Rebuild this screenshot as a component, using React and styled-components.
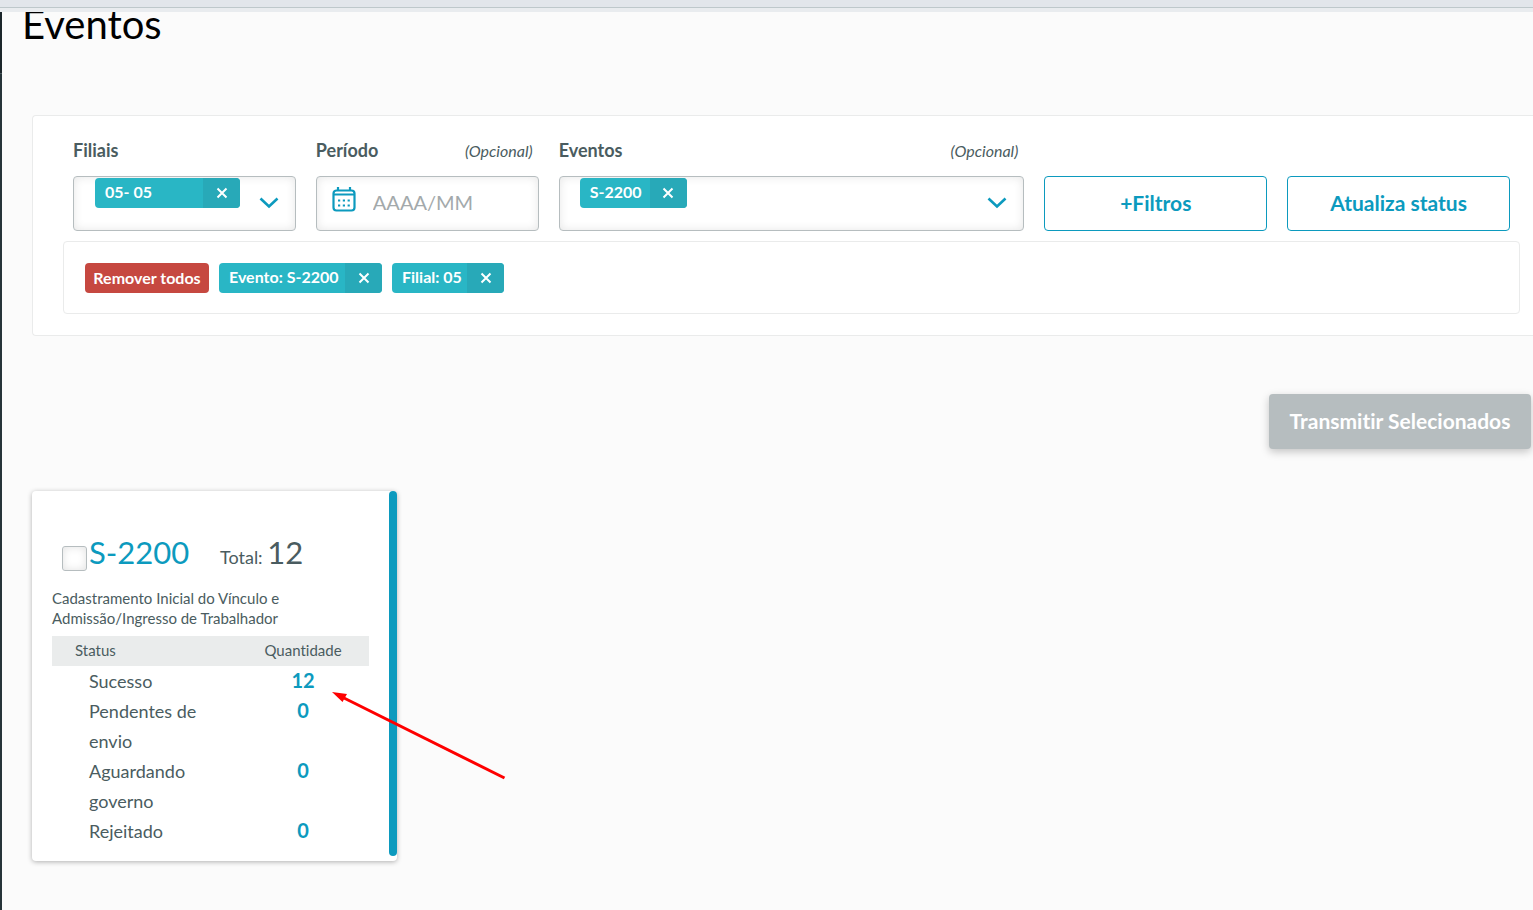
import React from "react";
import styled, { createGlobalStyle, css } from "styled-components";

const color = {
  primary: "#0c9abe",
  chip: "#29b6c5",
  chipDark: "#28a9b8",
  danger: "#c64840",
  text: "#4a5c60",
  line: "#eaebeb",
  control: "#b6bdbf",
};

const GlobalStyle = createGlobalStyle`
  *, *::before, *::after { box-sizing: border-box; }
  body {
    margin: 0;
    background: #fbfbfb;
    color: ${color.text};
    font-family: Lato, "Liberation Sans", sans-serif;
    font-variant-ligatures: none;
  }
  button, input { font-family: inherit; font-variant-ligatures: none; }
`;

const Page = styled.div`
  min-height: 100vh;
  display: flex;
  flex-direction: column;
  overflow: hidden;
`;

const TopBar = styled.header`
  height: 12px;
  flex: none;
  background: linear-gradient(#e2e6eb 0 7px, #bec8cb 7px 8px, #e9ecef 8px 12px);
`;

const Body = styled.div`
  flex: 1;
  display: flex;
`;

const SideEdge = styled.aside`
  width: 2px;
  flex: none;
  background: linear-gradient(#1b262b 0 61px, #4b5a5e 61px 62px, #263439 62px);
`;

const Main = styled.main`
  flex: 1;
  min-width: 0;
  overflow: hidden;
  padding: 0 0 48px 30px;
`;

const Title = styled.h1`
  margin: -12px 0 67px -10px;
  font-size: 40px;
  line-height: 48px;
  font-weight: 400;
  color: #000;
`;

const Panel = styled.section`
  background: #fff;
  border: 1px solid ${color.line};
  border-right: 0;
  border-radius: 4px 0 0 4px;
  padding: 20px 13px 21px 30px;
`;

const FilterGrid = styled.form`
  display: grid;
  grid-template-columns: repeat(6, 1fr);
  column-gap: 20px;
  align-items: end;
  padding: 0 10px;
`;

const Field = styled.div`
  grid-column: span ${(p) => p.$span || 1};
  min-width: 0;
`;

const FieldHead = styled.div`
  display: flex;
  justify-content: space-between;
  align-items: center;
  height: 28px;
  margin-bottom: 12px;
  padding-right: 6px;
`;

const Label = styled.label`
  font-size: 18px;
  font-weight: 700;
`;

const Optional = styled.span`
  font-size: 16px;
  font-style: italic;
`;

const Control = styled.div`
  display: flex;
  height: 55px;
  border: 1px solid ${color.control};
  border-radius: 4px;
  background: #fff;
  box-shadow: inset 0 0 10px rgba(0, 0, 0, 0.1);
`;

const MultiSelect = styled(Control)`
  justify-content: space-between;
  align-items: flex-start;
  padding: 1px 16px 0 ${(p) => (p.$wide ? 20 : 21)}px;
`;

const DateBox = styled(Control)`
  align-items: flex-start;
  padding: 9px 14px 0;
`;

const DateInput = styled.input`
  flex: 1;
  min-width: 0;
  height: 32px;
  margin-left: 16px;
  padding: 0;
  border: 0;
  outline: 0;
  background: none;
  font-size: 20px;
  color: ${color.text};
  &::placeholder { color: #a3a9ab; opacity: 1; }
`;

const IconButton = styled.button`
  display: flex;
  align-items: center;
  justify-content: center;
  padding: 0;
  border: 0;
  background: none;
  color: ${color.primary};
  cursor: pointer;
`;

const Toggle = styled(IconButton)`
  width: 20px;
  height: 50px;
`;

const chipBox = css`
  height: 30px;
  border-radius: 4px;
  color: #fff;
  font-size: 16px;
  font-weight: 700;
`;

const ChipBox = styled.span`
  ${chipBox}
  display: flex;
  width: ${(p) => p.$width}px;
  overflow: hidden;
  background: ${color.chip};
`;

const ChipText = styled.span`
  flex: 1;
  padding-left: 10px;
  line-height: 28px;
  white-space: nowrap;
`;

const ChipClose = styled(IconButton)`
  width: 37px;
  color: #fff;
  background: ${color.chipDark};
`;

const RemoveAll = styled.button`
  ${chipBox}
  width: 124px;
  padding: 0 0 2px;
  border: 0;
  background: ${color.danger};
  cursor: pointer;
`;

const OutlineButton = styled.button`
  height: 55px;
  padding: 0 0 2px;
  border: 1px solid ${color.primary};
  border-radius: 4px;
  background: #fff;
  color: ${color.primary};
  font-size: 21px;
  font-weight: 700;
  cursor: pointer;
`;

const ActiveFilters = styled.div`
  display: flex;
  gap: 10px;
  margin-top: 10px;
  padding: 21px;
  height: 73px;
  border: 1px solid ${color.line};
  border-radius: 4px;
`;

const Actions = styled.div`
  display: flex;
  justify-content: flex-end;
  margin: 58px 2px 42px 0;
`;

const SendButton = styled.button`
  width: 262px;
  height: 55px;
  padding: 0 0 2px;
  border: 0;
  border-radius: 4px;
  background: ${color.control};
  color: #fff;
  font-size: 21px;
  font-weight: 700;
  box-shadow: 0 3px 8px rgba(0, 0, 0, 0.22);
`;

const Card = styled.article`
  position: relative;
  width: 365px;
  padding: 45px 28px 15px 20px;
  border-radius: 4px;
  background: #fff;
  box-shadow: 0 1px 5px rgba(0, 0, 0, 0.3);
`;

const Accent = styled.span`
  position: absolute;
  top: 0;
  right: 0;
  bottom: 5px;
  width: 8px;
  border-radius: 4px;
  background: ${color.primary};
`;

const CardHead = styled.div`
  display: flex;
  align-items: baseline;
  height: 35px;
  padding-left: 10px;
`;

const Check = styled.input`
  appearance: none;
  flex: none;
  align-self: flex-end;
  width: 25px;
  height: 25px;
  margin: 0 2px 0 0;
  border: 1px solid ${color.control};
  border-radius: 3px;
  background: #fff;
  box-shadow: inset 0 0 8px rgba(0, 0, 0, 0.12);
`;

const Code = styled.label`
  width: 131px;
  font-size: 31px;
  line-height: 32px;
  color: ${color.primary};
`;

const Total = styled.span`
  font-size: 18px;
  line-height: 32px;
`;

const TotalValue = styled.span`
  font-size: 31px;
`;

const Description = styled.p`
  margin: 17px 0 8px;
  font-size: 15px;
  line-height: 20px;
`;

const Table = styled.table`
  width: 100%;
  table-layout: fixed;
  border-collapse: collapse;
`;

const HeadCell = styled.th`
  width: ${(p) => p.$width};
  height: 30px;
  padding: 0 0 2px ${(p) => p.$indent || 0}px;
  background: #eaecec;
  font-size: 15px;
  font-weight: 400;
  line-height: 28px;
  text-align: ${(p) => (p.$indent ? "left" : "center")};
`;

const StatusCell = styled.td`
  padding: 0 20px 0 37px;
  font-size: 18px;
  line-height: 30px;
`;

const AmountCell = styled.td`
  padding: 0;
  vertical-align: top;
  text-align: center;
  font-size: 20px;
  font-weight: 700;
  line-height: 28px;
  color: ${color.primary};
`;

const Arrow = styled.svg`
  position: absolute;
  top: 200px;
  left: 300px;
  pointer-events: none;
`;

const ChevronIcon = () => (
  <svg width="20" height="12" viewBox="0 0 20 12" fill="none" stroke="currentColor" strokeWidth="2.6" aria-hidden="true">
    <path d="M1.5 1.5 10 9.5l8.500-8" />
  </svg>
);

const CloseIcon = () => (
  <svg width="12" height="12" viewBox="0 0 12 12" stroke="currentColor" strokeWidth="2" aria-hidden="true">
    <path d="M1.500 1.500 10.500 10.500M10.500 1.500 1.500 10.500" />
  </svg>
);

const CalendarIcon = () => (
  <svg width="26" height="28" viewBox="0 0 26 28" fill="none" stroke="currentColor" strokeWidth="2.200" aria-hidden="true">
    <rect x="2.500" y="4.500" width="21" height="20" rx="3" />
    <path d="M2.500 8.500h21M7 1v4M19 1v4" />
    <path d="M7 14.500h12M7 19.500h12" strokeWidth="2.200" strokeDasharray="2.200 2.600" />
  </svg>
);

const Chip = ({ children, width }) => (
  <ChipBox $width={width}>
    <ChipText>{children}</ChipText>
    <ChipClose type="button" aria-label={`Remover ${children}`}>
      <CloseIcon />
    </ChipClose>
  </ChipBox>
);

const statuses = [
  { name: "Sucesso", amount: 12 },
  { name: "Pendentes de envio", amount: 0 },
  { name: "Aguardando governo", amount: 0 },
  { name: "Rejeitado", amount: 0 },
];

export default function App() {
  return (
    <Page>
      <GlobalStyle />
      <TopBar />
      <Body>
        <SideEdge />
        <Main>
          <Title>Eventos</Title>
          <Panel>
            <FilterGrid>
              <Field>
                <FieldHead>
                  <Label htmlFor="filiais">Filiais</Label>
                </FieldHead>
                <MultiSelect>
                  <Chip width={145}>05- 05</Chip>
                  <Toggle id="filiais" type="button" aria-haspopup="listbox">
                    <ChevronIcon />
                  </Toggle>
                </MultiSelect>
              </Field>
              <Field>
                <FieldHead>
                  <Label htmlFor="periodo">Período</Label>
                  <Optional>(Opcional)</Optional>
                </FieldHead>
                <DateBox>
                  <IconButton type="button" aria-label="Abrir calendário">
                    <CalendarIcon />
                  </IconButton>
                  <DateInput id="periodo" placeholder="AAAA/MM" />
                </DateBox>
              </Field>
              <Field $span={2}>
                <FieldHead>
                  <Label htmlFor="eventos">Eventos</Label>
                  <Optional>(Opcional)</Optional>
                </FieldHead>
                <MultiSelect $wide>
                  <Chip width={107}>S-2200</Chip>
                  <Toggle id="eventos" type="button" aria-haspopup="listbox">
                    <ChevronIcon />
                  </Toggle>
                </MultiSelect>
              </Field>
              <OutlineButton type="button">+Filtros</OutlineButton>
              <OutlineButton type="button">Atualiza status</OutlineButton>
            </FilterGrid>
            <ActiveFilters>
              <RemoveAll type="button">Remover todos</RemoveAll>
              <Chip width={163}>Evento: S-2200</Chip>
              <Chip width={112}>Filial: 05</Chip>
            </ActiveFilters>
          </Panel>
          <Actions>
            <SendButton type="button">Transmitir Selecionados</SendButton>
          </Actions>
          <Card>
            <Accent />
            <CardHead>
              <Check id="s2200" type="checkbox" />
              <Code htmlFor="s2200">S-2200</Code>
              <Total>
                Total: <TotalValue>12</TotalValue>
              </Total>
            </CardHead>
            <Description>Cadastramento Inicial do Vínculo e Admissão/Ingresso de Trabalhador</Description>
            <Table>
              <thead>
                <tr>
                  <HeadCell $width="185px" $indent={23}>Status</HeadCell>
                  <HeadCell>Quantidade</HeadCell>
                </tr>
              </thead>
              <tbody>
                {statuses.map((s) => (
                  <tr key={s.name}>
                    <StatusCell>{s.name}</StatusCell>
                    <AmountCell>{s.amount}</AmountCell>
                  </tr>
                ))}
              </tbody>
            </Table>
            <Arrow width="174" height="90" viewBox="0 0 174 90" aria-hidden="true">
              <path d="M10 6 172.500 87" stroke="#fe0000" strokeWidth="3" />
              <path d="M0 1 15 3 13 6.500 10.500 11Z" fill="#fe0000" />
            </Arrow>
          </Card>
        </Main>
      </Body>
    </Page>
  );
}
